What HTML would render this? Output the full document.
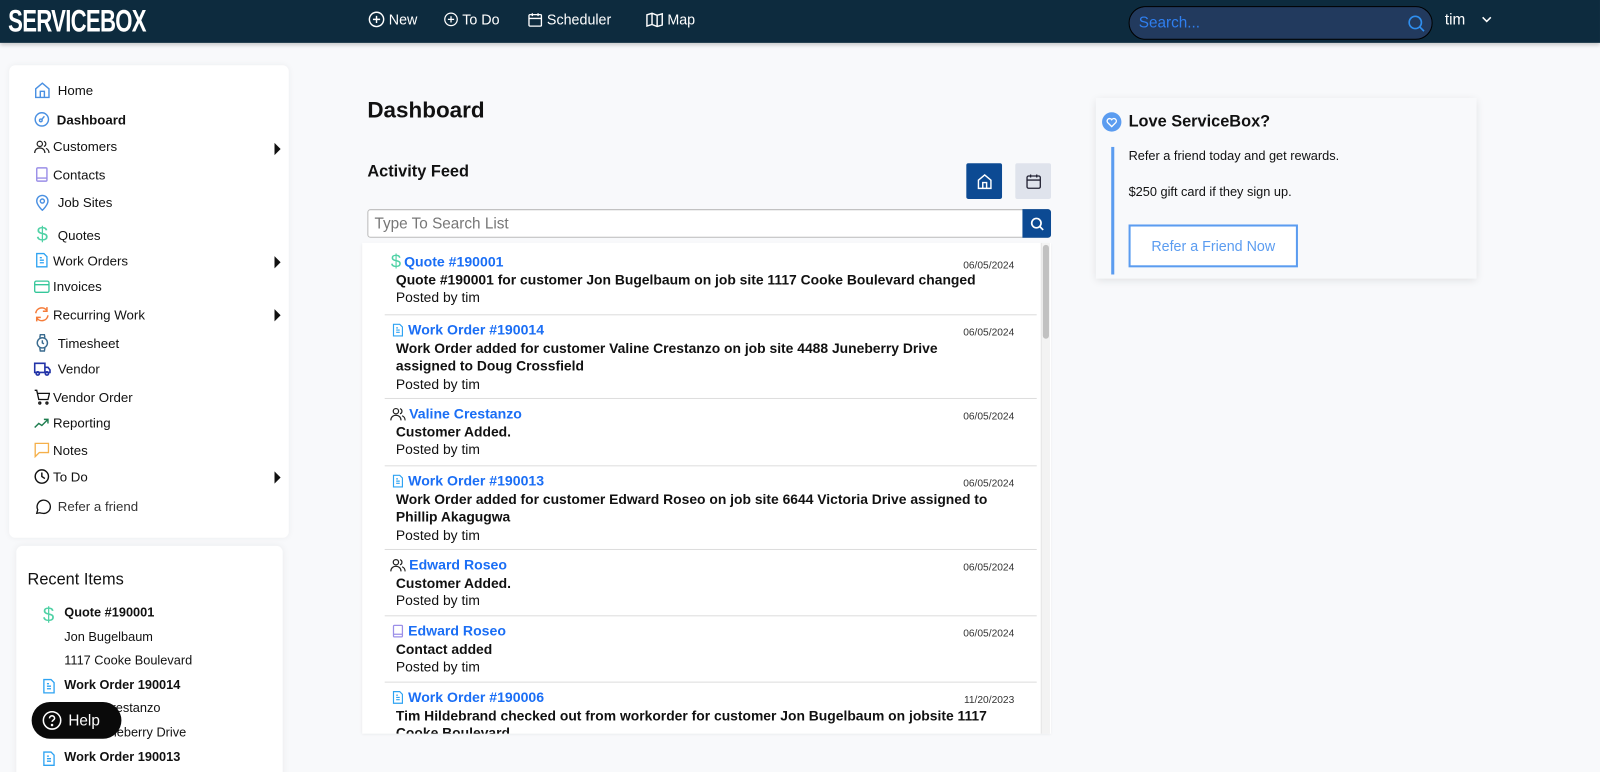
<!DOCTYPE html>
<html style="overflow:hidden;height:772px"><head><meta charset="utf-8"><style>
*{box-sizing:border-box;margin:0;padding:0}
body{width:1600px;height:772px;overflow:hidden;background:#f8f9fb;font-family:"Liberation Sans",sans-serif;color:#111;position:relative}
#w{position:absolute;left:0;top:0;width:1568px;height:757px;overflow:hidden;transform:scale(1.0204);transform-origin:0 0}
.hdr{position:absolute;left:0;top:0;width:1568px;height:42px;background:#0d2b3e;box-shadow:0 2px 4px rgba(0,0,0,.2)}
.logo{position:absolute;left:8px;top:3px;color:#fff;font-size:31px;font-weight:bold;letter-spacing:-1px;transform:scaleX(.7);transform-origin:left;font-family:"Liberation Sans Narrow","Liberation Sans",sans-serif}
.nav{position:absolute;top:11px;color:#fff;font-size:14px;display:flex;align-items:center;gap:4px}
.srch{position:absolute;left:1106px;top:6px;width:298px;height:33px;border-radius:17px;background:#223a5e;border:1px solid #000}
.srch span{position:absolute;left:9px;top:7px;color:#2f7ff0;font-size:15px}
.side{position:absolute;left:9px;top:64px;width:274px;height:463px;background:#fff;border-radius:6px;box-shadow:0 0 6px rgba(0,0,0,.05)}
.si{position:absolute;left:24px;font-size:13px;display:flex;align-items:center;gap:3px}
.arr{position:absolute;left:260px;width:0;height:0;border-left:6px solid #111;border-top:6px solid transparent;border-bottom:6px solid transparent}
.recent{position:absolute;left:16px;top:535px;width:261px;height:250px;background:#fff;border-radius:6px;box-shadow:0 0 8px rgba(0,0,0,.06)}
.ri{position:absolute;left:47px;font-size:12.5px}
h1{position:absolute;left:360px;top:95px;font-size:22px;font-weight:bold}
.af{position:absolute;left:360px;top:160px;font-size:16px;font-weight:bold}
.bt{position:absolute;top:160px;width:35px;height:35px;border-radius:2px;display:flex;align-items:center;justify-content:center}
.inp{position:absolute;left:360px;top:205px;width:670px;height:28px;border:1px solid #bbb;border-radius:3px;background:#fff}
.inp span{position:absolute;left:6px;top:5px;color:#777;font-size:15px}
.inp b{position:absolute;right:-1px;top:-1px;width:28px;height:28px;background:#0c4a93;border-radius:0 3px 3px 0;display:flex;align-items:center;justify-content:center}
.feed{position:absolute;left:355px;top:238px;width:675px;height:481px;background:#fff;overflow:hidden;box-shadow:0 1px 3px rgba(0,0,0,.08)}
.sb{position:absolute;right:1px;top:0;width:9px;height:481px;background:#f3f3f3;border-left:1px solid #e5e5e5}
.sb i{position:absolute;left:1px;top:2px;width:6px;height:92px;background:#c1c1c1;border-radius:3px}
.it{position:absolute;left:22px;width:639px;border-bottom:1px solid #ddd;font-size:13.6px;line-height:17.5px}
.it .t{color:#1a6ef5;font-weight:bold;font-size:13.8px;display:flex;align-items:center;gap:3px;margin-left:6px}
.it .d{position:absolute;right:22px;top:4px;font-size:10px;color:#333}
.it p{margin-left:11px;font-weight:bold}
.it p.pb{font-weight:normal}
.card{position:absolute;left:1074px;top:96px;width:373px;height:177px;background:#f8f9fb;box-shadow:0 2px 8px rgba(0,0,0,.1)}
.help{position:absolute;left:31px;top:688px;width:88px;height:36px;background:#0a0a0a;border-radius:18px;color:#fff;font-size:15px;display:flex;align-items:center;gap:6px;padding-left:10px}
</style></head><body><div id="w">
<div class="hdr">
<div class="logo">SERVICEBOX</div>
<div class="nav" style="left:361px"><svg width="16" height="16" viewBox="0 0 16 16" fill="none" stroke="#fff" stroke-width="1.4"><circle cx="8" cy="8" r="7"/><path d="M8 4.5v7M4.5 8h7"/></svg> New</div>
<div class="nav" style="left:435px"><svg width="14" height="14" viewBox="0 0 16 16" fill="none" stroke="#fff" stroke-width="1.4"><circle cx="8" cy="8" r="7"/><path d="M8 4.5v7M4.5 8h7"/></svg> To Do</div>
<div class="nav" style="left:517px"><svg width="15" height="15" viewBox="0 0 16 16" fill="none" stroke="#fff" stroke-width="1.4"><rect x="1.5" y="2.5" width="13" height="12" rx="1"/><path d="M1.5 6.5h13M5 1v3M11 1v3"/></svg> Scheduler</div>
<div class="nav" style="left:633px"><svg width="17" height="15" viewBox="0 0 17 15" fill="none" stroke="#fff" stroke-width="1.4"><path d="M1 2.5l5-1.5 5 2 5-1.5v11l-5 1.5-5-2-5 1.5z M6 1v11 M11 3v11"/></svg> Map</div>
<div class="srch"><span>Search...</span><svg style="position:absolute;right:6px;top:7px" width="18" height="18" viewBox="0 0 18 18" fill="none" stroke="#2f8ff0" stroke-width="1.6"><circle cx="8" cy="8" r="6"/><path d="M12.5 12.5l4 4"/></svg></div>
<div style="position:absolute;left:1416px;top:11px;color:#fff;font-size:15px">tim</div>
<svg style="position:absolute;left:1452px;top:16px" width="10" height="7" viewBox="0 0 10 7" fill="none" stroke="#fff" stroke-width="1.5"><path d="M1 1l4 4 4-4"/></svg>
</div>

<div class="side">
<div class="si" style="top:16px"><svg width="17" height="17" viewBox="0 0 17 17" fill="none" stroke="#4a90e2" stroke-width="1.4"><path d="M2 7l6.5-5.5L15 7v8.5H2z M6.5 15.5v-6h4v6"/></svg>&nbsp;Home</div>
<div class="si" style="top:45px;font-weight:bold"><svg width="16" height="16" viewBox="0 0 16 16" fill="none" stroke="#4a90e2" stroke-width="1.4"><circle cx="8" cy="8" r="6.5"/><circle cx="7" cy="9" r="1.3"/><path d="M8 8l2.5-3"/></svg>&nbsp;Dashboard</div>
<div class="si" style="top:72px"><svg width="16" height="14" viewBox="0 0 16 14" fill="none" stroke="#222" stroke-width="1.2"><circle cx="6" cy="4" r="2.6"/><path d="M1 13c0-3 2-5 5-5s5 2 5 5M10 1.5a2.6 2.6 0 010 5M12 8.5c2 .5 3 2.5 3 4.5"/></svg>Customers</div><div class="arr" style="top:76px"></div>
<div class="si" style="top:99px"><svg width="16" height="16" viewBox="0 0 16 16" fill="none" stroke="#9b8fe8" stroke-width="1.4"><rect x="3" y="1.5" width="10" height="13" rx="1"/><path d="M3 11.5h10"/></svg>Contacts</div>
<div class="si" style="top:126px"><svg width="17" height="17" viewBox="0 0 17 17" fill="none" stroke="#4a90e2" stroke-width="1.4"><path d="M8.5 16s-5.5-5-5.5-9a5.5 5.5 0 0111 0c0 4-5.5 9-5.5 9z"/><circle cx="8.5" cy="7" r="2"/></svg>&nbsp;Job Sites</div>
<div class="si" style="top:155px"><span style="color:#4fd1a5;font-size:20px;width:17px;text-align:center">$</span>&nbsp;Quotes</div>
<div class="si" style="top:183px"><svg width="16" height="16" viewBox="0 0 16 16" fill="none" stroke="#2ea3f2" stroke-width="1.3"><path d="M3 1.5h7l3 3v10H3z M6 8h4M6 10.5h4M6 5.5h2"/></svg>Work Orders</div><div class="arr" style="top:187px"></div>
<div class="si" style="top:209px"><svg width="16" height="14" viewBox="0 0 16 14" fill="none" stroke="#35c79a" stroke-width="1.3"><rect x="1" y="1.5" width="14" height="11" rx="1.5"/><path d="M1 5h14"/></svg>Invoices</div>
<div class="si" style="top:236px"><svg width="16" height="16" viewBox="0 0 16 16" fill="none" stroke="#f57c3a" stroke-width="1.5"><path d="M2 7a6 6 0 0111-2.5M14 9a6 6 0 01-11 2.5M13 1v4h-4M3 15v-4h4"/></svg>Recurring Work</div><div class="arr" style="top:239px"></div>
<div class="si" style="top:263px"><svg width="17" height="18" viewBox="0 0 17 18" fill="none" stroke="#3a6b8f" stroke-width="1.4"><circle cx="8.5" cy="9" r="5"/><path d="M6 4l.5-3h4l.5 3M6 14l.5 3h4l.5-3M8.5 6.5V9l1.5 1"/></svg>&nbsp;Timesheet</div>
<div class="si" style="top:290px"><svg width="17" height="15" viewBox="0 0 17 15" fill="none" stroke="#2233a8" stroke-width="1.6"><path d="M1 2h10v9H1z M11 6h3l2 2.5V11h-5"/><circle cx="4" cy="12" r="1.6"/><circle cx="13" cy="12" r="1.6"/></svg>&nbsp;Vendor</div>
<div class="si" style="top:317px"><svg width="16" height="16" viewBox="0 0 16 16" fill="none" stroke="#111" stroke-width="1.3"><path d="M1 1.5h2l2 9h9l1.5-6H4"/><circle cx="6" cy="14" r="1"/><circle cx="13" cy="14" r="1"/></svg>Vendor Order</div>
<div class="si" style="top:343px"><svg width="16" height="12" viewBox="0 0 16 12" fill="none" stroke="#1e7d4f" stroke-width="1.4"><path d="M1 10l4-4 3 2 6-6M10 2h4v4"/></svg>Reporting</div>
<div class="si" style="top:369px"><svg width="16" height="16" viewBox="0 0 16 16" fill="none" stroke="#f5b04a" stroke-width="1.3"><path d="M1.5 1.5h13v9h-9l-4 4z"/></svg>Notes</div>
<div class="si" style="top:395px"><svg width="16" height="16" viewBox="0 0 16 16" fill="none" stroke="#111" stroke-width="1.4"><circle cx="8" cy="8" r="6.5"/><path d="M8 4v4l3 2"/></svg>To Do</div><div class="arr" style="top:398px"></div>
<div class="si" style="top:424px;color:#333"><svg width="17" height="17" viewBox="0 0 17 17" fill="none" stroke="#111" stroke-width="1.3"><path d="M3 15l1-3.5A6.5 6.5 0 118.5 15 6.5 6.5 0 016 14.5z"/></svg>&nbsp;Refer a friend</div>
</div>

<div class="recent">
<div style="position:absolute;left:11px;top:25px;font-size:16px">Recent Items</div>
<div class="ri" style="left:26px;top:57px;color:#4fd1a5;font-size:20px">$</div>
<div class="ri" style="top:58px;font-weight:bold">Quote #190001</div>
<div class="ri" style="top:82px">Jon Bugelbaum</div>
<div class="ri" style="top:105px">1117 Cooke Boulevard</div>
<svg style="position:absolute;left:24px;top:129px" width="16" height="17" viewBox="0 0 16 16" fill="none" stroke="#2ea3f2" stroke-width="1.3"><path d="M3 1.5h7l3 3v10H3z M6 8h4M6 10.5h4M6 5.5h2"/></svg>
<div class="ri" style="top:129px;font-weight:bold">Work Order 190014</div>
<div class="ri" style="top:152px">Valine Crestanzo</div>
<div class="ri" style="top:176px">4488 Juneberry Drive</div>
<svg style="position:absolute;left:24px;top:200px" width="16" height="17" viewBox="0 0 16 16" fill="none" stroke="#2ea3f2" stroke-width="1.3"><path d="M3 1.5h7l3 3v10H3z M6 8h4M6 10.5h4M6 5.5h2"/></svg>
<div class="ri" style="top:200px;font-weight:bold">Work Order 190013</div>
</div>
<div class="help"><svg width="20" height="20" viewBox="0 0 20 20" fill="none" stroke="#fff" stroke-width="1.5"><circle cx="10" cy="10" r="8.5"/><path d="M7.5 8a2.5 2.5 0 115 0c0 1.5-2.5 2-2.5 3.5"/><circle cx="10" cy="14.5" r=".5" fill="#fff"/></svg>Help</div>

<h1>Dashboard</h1>
<div class="af">Activity Feed</div>
<div class="bt" style="left:947px;background:#0c4a93"><svg width="16" height="16" viewBox="0 0 17 17" fill="none" stroke="#fff" stroke-width="1.5"><path d="M2 7l6.5-5.5L15 7v8.5H2z M6.5 15.5v-6h4v6"/></svg></div>
<div class="bt" style="left:995px;background:#dfe3ec"><svg width="16" height="16" viewBox="0 0 16 16" fill="none" stroke="#223" stroke-width="1.3"><rect x="1.5" y="2.5" width="13" height="12" rx="1.5"/><path d="M1.5 6.5h13M5 1v3M11 1v3"/></svg></div>
<div class="inp"><span>Type To Search List</span><b><svg width="15" height="15" viewBox="0 0 18 18" fill="none" stroke="#fff" stroke-width="2"><circle cx="8" cy="8" r="5.5"/><path d="M12 12l4 4"/></svg></b></div>

<div class="feed">
<div class="sb"><i></i></div>
<div class="it" style="top:10px;height:61px"><div class="t"><span style="color:#4fd1a5;font-size:18px;font-weight:normal">$</span> Quote #190001</div><div class="d">06/05/2024</div><p>Quote #190001 for customer Jon Bugelbaum on job site 1117 Cooke Boulevard changed</p><p class="pb">Posted by tim</p></div>
<div class="it" style="top:71px;height:82px;padding-top:6px"><div class="t"><svg width="14" height="15" viewBox="0 0 16 16" fill="none" stroke="#2ea3f2" stroke-width="1.3"><path d="M3 1.5h7l3 3v10H3z M6 8h4M6 10.5h4M6 5.5h2"/></svg>Work Order #190014</div><div class="d" style="top:9px">06/05/2024</div><p>Work Order added for customer Valine Crestanzo on job site 4488 Juneberry Drive<br>assigned to Doug Crossfield</p><p class="pb">Posted by tim</p></div>
<div class="it" style="top:153px;height:66px;padding-top:6px"><div class="t" style="margin-left:5px"><svg width="16" height="14" viewBox="0 0 16 14" fill="none" stroke="#222" stroke-width="1.2"><circle cx="6" cy="4" r="2.6"/><path d="M1 13c0-3 2-5 5-5s5 2 5 5M10 1.5a2.6 2.6 0 010 5M12 8.5c2 .5 3 2.5 3 4.5"/></svg>Valine Crestanzo</div><div class="d" style="top:9px">06/05/2024</div><p>Customer Added.</p><p class="pb">Posted by tim</p></div>
<div class="it" style="top:219px;height:82px;padding-top:6px"><div class="t"><svg width="14" height="15" viewBox="0 0 16 16" fill="none" stroke="#2ea3f2" stroke-width="1.3"><path d="M3 1.5h7l3 3v10H3z M6 8h4M6 10.5h4M6 5.5h2"/></svg>Work Order #190013</div><div class="d" style="top:9px">06/05/2024</div><p>Work Order added for customer Edward Roseo on job site 6644 Victoria Drive assigned to<br>Phillip Akagugwa</p><p class="pb">Posted by tim</p></div>
<div class="it" style="top:301px;height:65px;padding-top:6px"><div class="t" style="margin-left:5px"><svg width="16" height="14" viewBox="0 0 16 14" fill="none" stroke="#222" stroke-width="1.2"><circle cx="6" cy="4" r="2.6"/><path d="M1 13c0-3 2-5 5-5s5 2 5 5M10 1.5a2.6 2.6 0 010 5M12 8.5c2 .5 3 2.5 3 4.5"/></svg>Edward Roseo</div><div class="d" style="top:9px">06/05/2024</div><p>Customer Added.</p><p class="pb">Posted by tim</p></div>
<div class="it" style="top:366px;height:65px;padding-top:6px"><div class="t"><svg width="14" height="15" viewBox="0 0 16 16" fill="none" stroke="#9b8fe8" stroke-width="1.4"><rect x="3" y="1.5" width="10" height="13" rx="1"/><path d="M3 11.5h10"/></svg>Edward Roseo</div><div class="d" style="top:9px">06/05/2024</div><p>Contact added</p><p class="pb">Posted by tim</p></div>
<div class="it" style="top:431px;height:82px;padding-top:6px;border:none"><div class="t"><svg width="14" height="15" viewBox="0 0 16 16" fill="none" stroke="#2ea3f2" stroke-width="1.3"><path d="M3 1.5h7l3 3v10H3z M6 8h4M6 10.5h4M6 5.5h2"/></svg>Work Order #190006</div><div class="d" style="top:9px">11/20/2023</div><p>Tim Hildebrand checked out from workorder for customer Jon Bugelbaum on jobsite 1117<br>Cooke Boulevard</p></div>
</div>

<div class="card">
<div style="position:absolute;left:6px;top:14px;width:19px;height:19px;border-radius:50%;background:#5b9cf0;display:flex;align-items:center;justify-content:center"><svg width="11" height="10" viewBox="0 0 12 11" fill="none" stroke="#fff" stroke-width="1.4"><path d="M6 10L1.5 5.5a2.5 2.5 0 014.5-3 2.5 2.5 0 014.5 3z"/></svg></div>
<div style="position:absolute;left:32px;top:15px;font-size:16px;font-weight:bold">Love ServiceBox?</div>
<div style="position:absolute;left:15px;top:48px;width:3px;height:125px;background:#5b9cf0"></div>
<div style="position:absolute;left:32px;top:50px;font-size:12.5px">Refer a friend today and get rewards.</div>
<div style="position:absolute;left:32px;top:85px;font-size:12.5px">$250 gift card if they sign up.</div>
<div style="position:absolute;left:32px;top:124px;width:166px;height:42px;border:2px solid #5b9cf0;background:#fff;color:#5b9cf0;font-size:14px;display:flex;align-items:center;justify-content:center">Refer a Friend Now</div>
</div>
</div></body></html>
